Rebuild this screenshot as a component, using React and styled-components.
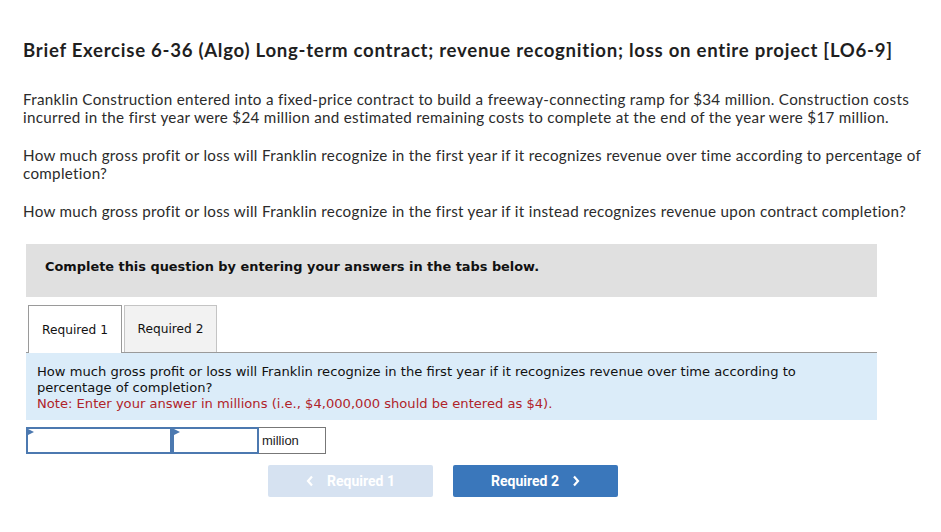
import React from "react";
import styled, { createGlobalStyle } from "styled-components";

const Global = createGlobalStyle`
  html, body { margin: 0; padding: 0; background: #fff; }
  body { font-family: "Lato", "Liberation Sans", sans-serif; color: #222; }
`;

const Page = styled.div`
  width: 941px;
  height: 532px;
  box-sizing: border-box;
  padding: 38px 0 0 23px;
  overflow: hidden;
`;

const Title = styled.h1`
  margin: 0 0 28px 0;
  font-family: "Lato", "Liberation Sans", sans-serif;
  font-weight: 700;
  font-size: 18.6px;
  line-height: 24px;
  color: #1f1f1f;
  letter-spacing: 0.72px;
  white-space: nowrap;
`;

const Para = styled.p`
  margin: 0 0 20px 0;
  font-family: "Lato", "Liberation Sans", sans-serif;
  font-size: 15.2px;
  line-height: 18px;
  letter-spacing: 0.3px;
  color: #2b2b2b;
  white-space: nowrap;
`;

const Prompt = styled.div`
  margin: 24px 0 0 3px;
  width: 851px;
  height: 53px;
  background: #e0e0e0;
  box-sizing: border-box;
  padding: 0 0 8px 19px;
  display: flex;
  align-items: center;
  font-family: "DejaVu Sans", Verdana, sans-serif;
  font-weight: 700;
  font-size: 12.9px;
  color: #111;
`;

const Tabs = styled.div`
  margin: 8px 0 0 3px;
  width: 851px;
  display: flex;
  align-items: flex-end;
  gap: 2px;
  padding-left: 2px;
  box-sizing: border-box;
`;

const Tab = styled.div`
  box-sizing: border-box;
  width: ${(p) => p.$w}px;
  height: ${(p) => (p.$active ? "48px" : "47px")};
  margin-bottom: ${(p) => (p.$active ? "-1px" : "0")};
  display: flex;
  align-items: center;
  justify-content: center;
  white-space: nowrap;
  font-family: "DejaVu Sans", Verdana, sans-serif;
  font-size: 12.2px;
  color: #111;
  background: ${(p) => (p.$active ? "#fff" : "#f2f2f2")};
  border: 1px solid ${(p) => (p.$active ? "#9a9a9a" : "#c4c4c4")};
  border-bottom: none;
  position: relative;
  z-index: ${(p) => (p.$active ? 1 : 0)};
`;

const Panel = styled.div`
  margin: 0 0 0 3px;
  width: 851px;
  height: 68px;
  box-sizing: border-box;
  background: #dbecf9;
  border-top: 1px solid #9a9a9a;
  padding: 11px 11px 0 11px;
  font-family: "DejaVu Sans", Verdana, sans-serif;
  font-size: 13.1px;
  line-height: 16px;
  color: #111;
`;

const Note = styled.div`
  color: #b0232a;
`;

const InputRow = styled.div`
  margin: 7px 0 0 3px;
  display: flex;
  height: 27px;
`;

const Field = styled.div`
  position: relative;
  width: ${(p) => p.$w}px;
  height: 27px;
  box-sizing: border-box;
  border: 2px solid #4c79b0;
  background: #fff;
  &::before {
    content: "";
    position: absolute;
    left: 0;
    top: 0;
    border-left: 6px solid #4c79b0;
    border-top: 3px solid transparent;
    border-bottom: 3px solid transparent;
  }
`;

const Unit = styled.div`
  width: 67px;
  height: 27px;
  box-sizing: border-box;
  border: 1px solid #777;
  border-left: none;
  display: flex;
  align-items: center;
  padding-left: 3px;
  font-family: "Liberation Sans", Arial, sans-serif;
  font-size: 13px;
  color: #222;
`;

const Nav = styled.div`
  margin: 11px 0 0 245px;
  display: flex;
  gap: 20px;
`;

const NavButton = styled.div`
  width: 165px;
  height: 32px;
  border-radius: 2px;
  background: ${(p) => (p.$disabled ? "#d6e2f1" : "#3a77bb")};
  color: #fff;
  display: flex;
  align-items: center;
  justify-content: center;
  gap: 13px;
  font-family: "Roboto", "Liberation Sans", sans-serif;
  font-weight: 700;
  font-size: 14px;
`;

const Chevron = ({ dir }) => (
  <svg width="8" height="12" viewBox="0 0 8 12">
    <path
      d={dir === "left" ? "M6 1.5 L2 6 L6 10.5" : "M2 1.5 L6 6 L2 10.5"}
      fill="none"
      stroke="#fff"
      strokeWidth="2.2"
    />
  </svg>
);

export default function App() {
  return (
    <>
      <Global />
      <Page>
        <Title>
          Brief Exercise 6-36 (Algo) Long-term contract; revenue recognition; loss on entire project [LO6-9]
        </Title>
        <Para>
          Franklin Construction entered into a fixed-price contract to build a freeway-connecting ramp for $34 million. Construction costs
          <br />
          incurred in the first year were $24 million and estimated remaining costs to complete at the end of the year were $17 million.
        </Para>
        <Para>
          How much gross profit or loss will Franklin recognize in the first year if it recognizes revenue over time according to percentage of
          <br />
          completion?
        </Para>
        <Para>
          How much gross profit or loss will Franklin recognize in the first year if it instead recognizes revenue upon contract completion?
        </Para>
        <Prompt>Complete this question by entering your answers in the tabs below.</Prompt>
        <Tabs>
          <Tab $active $w={94}>Required 1</Tab>
          <Tab $w={93}>Required 2</Tab>
        </Tabs>
        <Panel>
          How much gross profit or loss will Franklin recognize in the first year if it recognizes revenue over time according to
          <br />
          percentage of completion?
          <Note>Note: Enter your answer in millions (i.e., $4,000,000 should be entered as $4).</Note>
        </Panel>
        <InputRow>
          <Field $w={146} />
          <Field $w={87} />
          <Unit>million</Unit>
        </InputRow>
        <Nav>
          <NavButton $disabled>
            <Chevron dir="left" />
            Required 1
          </NavButton>
          <NavButton>
            Required 2
            <Chevron dir="right" />
          </NavButton>
        </Nav>
      </Page>
    </>
  );
}
